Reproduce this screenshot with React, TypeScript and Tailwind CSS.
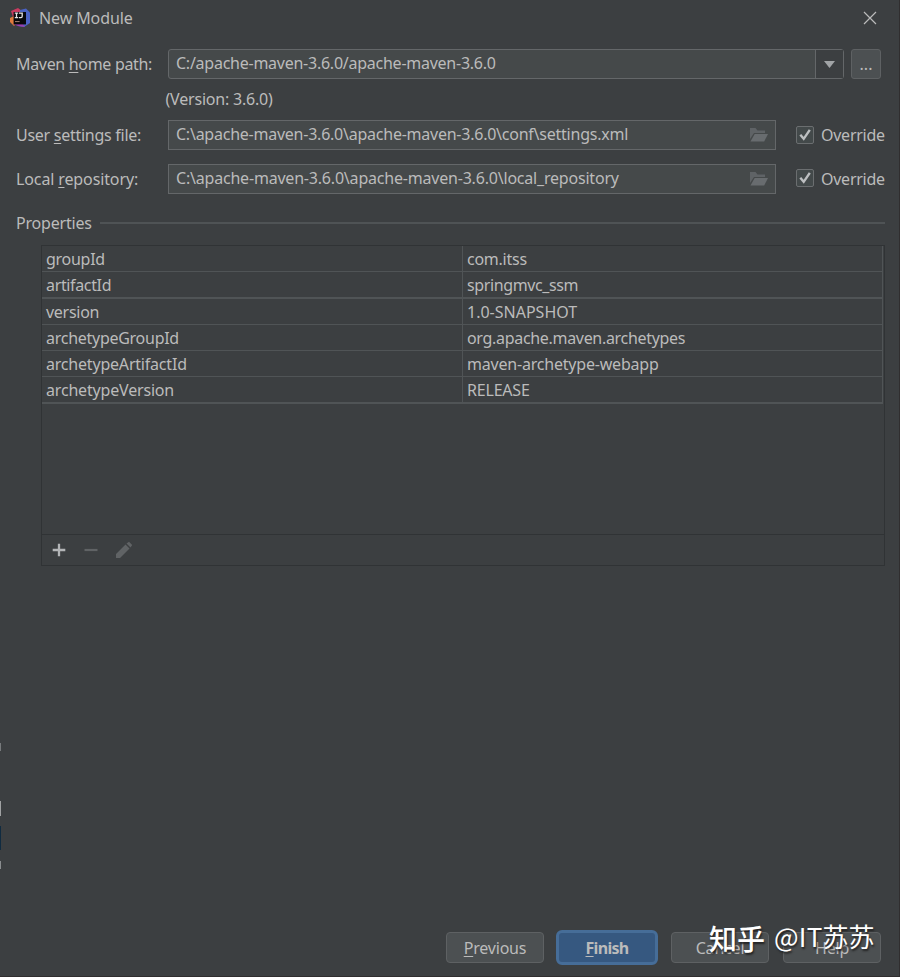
import React from "react";

const properties = [
  { name: "groupId", value: "com.itss", row: "h-[26px] border-b", nameTracking: "tracking-[-0.28px]", valueTracking: "tracking-[-0.25px]" },
  { name: "artifactId", value: "springmvc_ssm", row: "h-[27px] border-b-2", nameTracking: "tracking-[-0.35px]", valueTracking: "tracking-[-0.38px]" },
  { name: "version", value: "1.0-SNAPSHOT", row: "h-[26px] border-b", nameTracking: "tracking-[-0.28px]", valueTracking: "tracking-normal" },
  { name: "archetypeGroupId", value: "org.apache.maven.archetypes", row: "h-[26px] border-b", nameTracking: "tracking-[-0.27px]", valueTracking: "tracking-[-0.31px]" },
  { name: "archetypeArtifactId", value: "maven-archetype-webapp", row: "h-[26px] border-b", nameTracking: "tracking-[-0.2px]", valueTracking: "tracking-[-0.2px]" },
  { name: "archetypeVersion", value: "RELEASE", row: "h-[27px] border-b-2", nameTracking: "tracking-[-0.18px]", valueTracking: "tracking-[-0.2px]" },
];

function AppLogo() {
  return (
    <svg className="ml-[10px] h-5 w-5 shrink-0" viewBox="0 0 20 20">
      <path d="M1 3 8 0l4 3-5 13-6-3 2-4z" fill="#c93a60" />
      <path d="M0 10l4-2 3 7-3 3-4-4z" fill="#e07a3c" />
      <path d="M10 2l6-1.5 4 4V15l-6 4-6-1z" fill="#4a62c4" />
      <path d="M3 16l5 2 7 1-3-4z" fill="#9a3fb0" />
      <rect x="3.6" y="4" width="12.4" height="12.4" fill="#08080c" />
      <path d="M4.8 5.2h3.4M6.5 5.2v4.4M4.8 9.6h3.4M9 5.2h3.2v3q0 1.4-1.2 1.4H9" fill="none" stroke="#e4e4e6" strokeWidth="1.3" />
      <path d="M5 13.6h4.6" stroke="#a98372" strokeWidth="1" />
    </svg>
  );
}

function FolderIcon() {
  return (
    <svg className="h-4 w-5 shrink-0" viewBox="0 0 20 16">
      <path d="M1 12V1h5.5l2 2.5H16V6H5z" fill="#5f6366" />
      <path d="M1.5 14.5 5.7 7H19l-3.8 7.5z" fill="#686c6f" />
    </svg>
  );
}

function Mnemonic({ children }: { children: string }) {
  return (
    <span className="underline decoration-1 underline-offset-2 [text-decoration-skip-ink:none]">{children}</span>
  );
}

function Override({ offset }: { offset: string }) {
  return (
    <label className="ml-[19.5px] flex items-center">
      <span className={`flex h-[18px] w-[18px] items-center justify-center rounded-[2px] border border-[#6b6e70] bg-[#43494a] ${offset}`}>
        <svg className="h-4 w-4" viewBox="0 0 16 16">
          <path d="M3.3 7.8l3.4 4L12.8 2.8" fill="none" stroke="#bdbfc1" strokeWidth="2.4" />
        </svg>
      </span>
      <span className="ml-[7.5px] tracking-[-0.25px]">Override</span>
    </label>
  );
}

function PathField({ value, tracking }: { value: string; tracking: string }) {
  return (
    <div className="flex h-[30px] w-[608px] items-center justify-between border border-[#646769] bg-[#45494a] pr-[6px] pl-[7px]">
      <span className={`-mt-[2px] ${tracking}`}>{value}</span>
      <FolderIcon />
    </div>
  );
}

function Button({ first, rest, underlined = false }: { first: string; rest: string; underlined?: boolean }) {
  return (
    <button className="flex h-[31px] w-[98px] items-center justify-center rounded-[4px] border border-[#5e6163] bg-[#4c5052] tracking-[-0.2px]">
      <span>
        {underlined ? <Mnemonic>{first}</Mnemonic> : first}
        {rest}
      </span>
    </button>
  );
}

export default function App() {
  return (
    <main className="relative flex h-[977px] w-[900px] flex-col overflow-hidden border-r border-b border-[#302e2f] bg-[#3c3f41] font-['Noto_Sans','Noto_Sans_CJK_SC',sans-serif] text-[16px] leading-[22px] text-[#bbbbbb]">
      <header className="flex h-[35px] items-center">
        <AppLogo />
        <h1 className="ml-[9px] tracking-[-0.1px]">New Module</h1>
        <svg className="mr-[22px] ml-auto h-[14px] w-[14px]" viewBox="0 0 14 14">
          <path d="M1 1l12 12M13 1L1 13" stroke="#bbbbbb" strokeWidth="1.2" />
        </svg>
      </header>

      <section className="mt-[14px] flex h-[30px] items-center pl-4">
        <span className="w-[152px] tracking-[-0.32px]">Maven <Mnemonic>h</Mnemonic>ome path:</span>
        <div className="flex h-[30px] w-[676px] items-center rounded-[3px] border border-[#646769] bg-[#45494a]">
          <span className="-mt-[2px] flex-1 pl-[7px] tracking-[-0.25px]">C:/apache-maven-3.6.0/apache-maven-3.6.0</span>
          <span className="flex h-full w-7 items-center justify-center border-l border-[#646769] bg-[#3c3f41]">
            <svg className="h-[7px] w-[11px]" viewBox="0 0 11 7"><path d="M0 0h11L5.5 7z" fill="#a1a4a6" /></svg>
          </span>
        </div>
        <button className="ml-[7px] flex h-[30px] w-[30px] items-center justify-center rounded-[3px] border border-[#5e6163] bg-[#4c5052]">...</button>
      </section>

      <p className="mt-[9px] h-[22px] pl-[165.5px] tracking-[-0.2px]">(Version: 3.6.0)</p>
      <section className="mt-[10px] flex h-[30px] items-center pl-4">
        <span className="w-[152px] tracking-[-0.27px]">User <Mnemonic>s</Mnemonic>ettings file:</span>
        <PathField value="C:\apache-maven-3.6.0\apache-maven-3.6.0\conf\settings.xml" tracking="tracking-[-0.24px]" />
        <Override offset="mt-0" />
      </section>
      <section className="mt-[14px] flex h-[30px] items-center pl-4">
        <span className="w-[152px] tracking-[-0.12px]">Local <Mnemonic>r</Mnemonic>epository:</span>
        <PathField value="C:\apache-maven-3.6.0\apache-maven-3.6.0\local_repository" tracking="tracking-[-0.2px]" />
        <Override offset="-mt-[2px]" />
      </section>

      <div className="mt-[18px] flex h-[22px] items-center pr-[14px] pl-4">
        <h2 className="tracking-[-0.2px]">Properties</h2>
        <span className="ml-2 h-[2px] flex-1 bg-[#4f5355]" />
      </div>

      <section className="mt-[11px] ml-[41px] flex h-[321px] w-[844px] flex-col border border-[#303335]">
        {properties.map((property) => (
          <div key={property.name} className={`mr-px flex shrink-0 border-r border-[#505456] ${property.row}`}>
            <span className={`flex w-[421px] items-center border-r border-[#505456] pl-1 ${property.nameTracking}`}>{property.name}</span>
            <span className={`flex flex-1 items-center pl-1 ${property.valueTracking}`}>{property.value}</span>
          </div>
        ))}
        <div className="mt-auto flex h-[31px] items-center border-t border-[#303335] pl-[10px]">
          <svg className="h-[14px] w-[14px]" viewBox="0 0 14 14"><path d="M7 .7v12.6M.7 7h12.6" stroke="#b3b5b7" strokeWidth="2.3" /></svg>
          <svg className="ml-[18px] h-[14px] w-[14px]" viewBox="0 0 14 14"><path d="M.5 7h13" stroke="#606365" strokeWidth="2.2" /></svg>
          <svg className="ml-[17px] h-[18px] w-[18px]" viewBox="0 0 18 18"><path d="M1 17v-4L10.5 3.5l4 4L5 17zM11.5 2.5 14 .8 17.2 4l-1.7 2.5z" fill="#606365" /></svg>
        </div>
      </section>

      <footer className="mt-auto mb-[11px] flex h-[35px] items-center pl-[446px]">
        <Button first="P" rest="revious" underlined />
        <button className="ml-3 flex h-[35px] w-[102px] items-center justify-center rounded-[6px] border-[3px] border-[#466d98] bg-[#365880] font-bold tracking-[-0.7px]">
          <span><Mnemonic>F</Mnemonic>inish</span>
        </button>
        <span className="ml-[13px]"><Button first="C" rest="ancel" /></span>
        <span className="ml-[14px]"><Button first="H" rest="elp" /></span>
      </footer>

      <div className="absolute top-[919px] left-[709px] flex items-start font-['Noto_Sans_CJK_SC',sans-serif] whitespace-nowrap text-white [text-shadow:1px_2px_2px_#222]">
        <span className="text-[28px] leading-[38px] font-medium">知乎</span>
        <span className="-mt-[2px] ml-[9px] text-[26px] leading-[38px] tracking-[0.2px]">@IT苏苏</span>
      </div>
      <span className="absolute top-[743px] left-0 h-2 w-px bg-[#777a7c]" />
      <span className="absolute top-[801px] left-0 h-[15px] w-px bg-[#a0a2a3]" />
      <span className="absolute top-[826px] left-0 h-6 w-px bg-[#102b40]" />
      <span className="absolute top-[861px] left-0 h-2 w-px bg-[#8a8d8f]" />
    </main>
  );
}
